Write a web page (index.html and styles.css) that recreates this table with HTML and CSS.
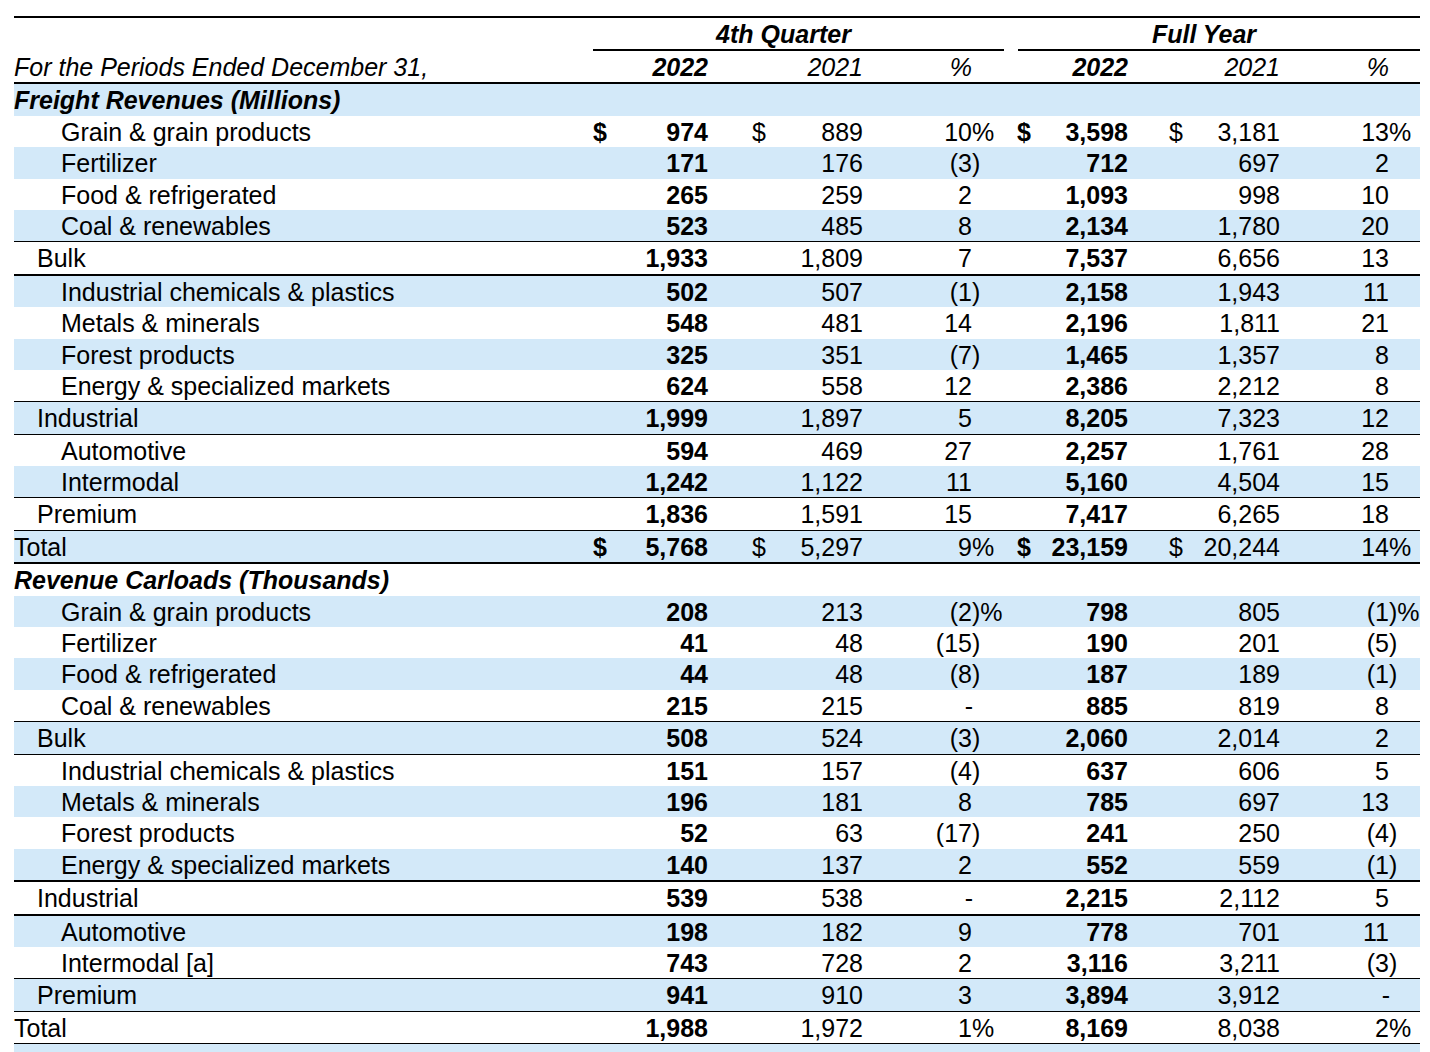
FILE: index.html
```html
<!DOCTYPE html>
<html lang="en">
<head>
<meta charset="utf-8">
<title>Freight Revenues and Revenue Carloads</title>
<link rel="stylesheet" href="styles.css">
</head>
<body>
<div class="tbl">
  <div class="hrow1">
    <div class="grp gq">4th Quarter</div>
    <div class="grp gf">Full Year</div>
  </div>
  <div class="row hrow2">
    <div class="lab">For the Periods Ended December 31,</div>
    <div class="n"><b>2022</b></div>
    <div class="n">2021</div>
    <div class="p">%</div>
    <div class="n"><b>2022</b></div>
    <div class="n">2021</div>
    <div class="p">%</div>
  </div>

  <div class="row bl head"><div class="lab">Freight Revenues (Millions)</div><div></div><div></div><div></div><div></div><div></div><div></div></div>
  <div class="row item"><div class="lab">Grain &amp; grain products</div><div class="n"><span class="ds">$</span>974</div><div class="n"><span class="ds">$</span>889</div><div class="p">10<span class="h">%</span></div><div class="n"><span class="ds">$</span>3,598</div><div class="n"><span class="ds">$</span>3,181</div><div class="p">13<span class="h">%</span></div></div>
  <div class="row item bl"><div class="lab">Fertilizer</div><div class="n">171</div><div class="n">176</div><div class="p">(3<span class="h">)</span></div><div class="n">712</div><div class="n">697</div><div class="p">2</div></div>
  <div class="row item"><div class="lab">Food &amp; refrigerated</div><div class="n">265</div><div class="n">259</div><div class="p">2</div><div class="n">1,093</div><div class="n">998</div><div class="p">10</div></div>
  <div class="row item bl"><div class="lab">Coal &amp; renewables</div><div class="n">523</div><div class="n">485</div><div class="p">8</div><div class="n">2,134</div><div class="n">1,780</div><div class="p">20</div></div>
  <div class="row sub t1"><div class="lab">Bulk</div><div class="n">1,933</div><div class="n">1,809</div><div class="p">7</div><div class="n">7,537</div><div class="n">6,656</div><div class="p">13</div></div>
  <div class="row item bl t2"><div class="lab">Industrial chemicals &amp; plastics</div><div class="n">502</div><div class="n">507</div><div class="p">(1<span class="h">)</span></div><div class="n">2,158</div><div class="n">1,943</div><div class="p">11</div></div>
  <div class="row item"><div class="lab">Metals &amp; minerals</div><div class="n">548</div><div class="n">481</div><div class="p">14</div><div class="n">2,196</div><div class="n">1,811</div><div class="p">21</div></div>
  <div class="row item bl"><div class="lab">Forest products</div><div class="n">325</div><div class="n">351</div><div class="p">(7<span class="h">)</span></div><div class="n">1,465</div><div class="n">1,357</div><div class="p">8</div></div>
  <div class="row item"><div class="lab">Energy &amp; specialized markets</div><div class="n">624</div><div class="n">558</div><div class="p">12</div><div class="n">2,386</div><div class="n">2,212</div><div class="p">8</div></div>
  <div class="row sub bl t1"><div class="lab">Industrial</div><div class="n">1,999</div><div class="n">1,897</div><div class="p">5</div><div class="n">8,205</div><div class="n">7,323</div><div class="p">12</div></div>
  <div class="row item t1"><div class="lab">Automotive</div><div class="n">594</div><div class="n">469</div><div class="p">27</div><div class="n">2,257</div><div class="n">1,761</div><div class="p">28</div></div>
  <div class="row item bl"><div class="lab">Intermodal</div><div class="n">1,242</div><div class="n">1,122</div><div class="p">11</div><div class="n">5,160</div><div class="n">4,504</div><div class="p">15</div></div>
  <div class="row sub t1"><div class="lab">Premium</div><div class="n">1,836</div><div class="n">1,591</div><div class="p">15</div><div class="n">7,417</div><div class="n">6,265</div><div class="p">18</div></div>
  <div class="row tot bl t1"><div class="lab">Total</div><div class="n"><span class="ds">$</span>5,768</div><div class="n"><span class="ds">$</span>5,297</div><div class="p">9<span class="h">%</span></div><div class="n"><span class="ds">$</span>23,159</div><div class="n"><span class="ds">$</span>20,244</div><div class="p">14<span class="h">%</span></div></div>

  <div class="row head t2"><div class="lab">Revenue Carloads (Thousands)</div><div></div><div></div><div></div><div></div><div></div><div></div></div>
  <div class="row item bl"><div class="lab">Grain &amp; grain products</div><div class="n">208</div><div class="n">213</div><div class="p">(2<span class="h">)%</span></div><div class="n">798</div><div class="n">805</div><div class="p">(1<span class="h">)%</span></div></div>
  <div class="row item"><div class="lab">Fertilizer</div><div class="n">41</div><div class="n">48</div><div class="p">(15<span class="h">)</span></div><div class="n">190</div><div class="n">201</div><div class="p">(5<span class="h">)</span></div></div>
  <div class="row item bl"><div class="lab">Food &amp; refrigerated</div><div class="n">44</div><div class="n">48</div><div class="p">(8<span class="h">)</span></div><div class="n">187</div><div class="n">189</div><div class="p">(1<span class="h">)</span></div></div>
  <div class="row item"><div class="lab">Coal &amp; renewables</div><div class="n">215</div><div class="n">215</div><div class="p"><span class="dash">-</span></div><div class="n">885</div><div class="n">819</div><div class="p">8</div></div>
  <div class="row sub bl t1"><div class="lab">Bulk</div><div class="n">508</div><div class="n">524</div><div class="p">(3<span class="h">)</span></div><div class="n">2,060</div><div class="n">2,014</div><div class="p">2</div></div>
  <div class="row item t1"><div class="lab">Industrial chemicals &amp; plastics</div><div class="n">151</div><div class="n">157</div><div class="p">(4<span class="h">)</span></div><div class="n">637</div><div class="n">606</div><div class="p">5</div></div>
  <div class="row item bl"><div class="lab">Metals &amp; minerals</div><div class="n">196</div><div class="n">181</div><div class="p">8</div><div class="n">785</div><div class="n">697</div><div class="p">13</div></div>
  <div class="row item"><div class="lab">Forest products</div><div class="n">52</div><div class="n">63</div><div class="p">(17<span class="h">)</span></div><div class="n">241</div><div class="n">250</div><div class="p">(4<span class="h">)</span></div></div>
  <div class="row item bl"><div class="lab">Energy &amp; specialized markets</div><div class="n">140</div><div class="n">137</div><div class="p">2</div><div class="n">552</div><div class="n">559</div><div class="p">(1<span class="h">)</span></div></div>
  <div class="row sub t2"><div class="lab">Industrial</div><div class="n">539</div><div class="n">538</div><div class="p"><span class="dash">-</span></div><div class="n">2,215</div><div class="n">2,112</div><div class="p">5</div></div>
  <div class="row item bl t2"><div class="lab">Automotive</div><div class="n">198</div><div class="n">182</div><div class="p">9</div><div class="n">778</div><div class="n">701</div><div class="p">11</div></div>
  <div class="row item"><div class="lab">Intermodal [a]</div><div class="n">743</div><div class="n">728</div><div class="p">2</div><div class="n">3,116</div><div class="n">3,211</div><div class="p">(3<span class="h">)</span></div></div>
  <div class="row sub bl t1"><div class="lab">Premium</div><div class="n">941</div><div class="n">910</div><div class="p">3</div><div class="n">3,894</div><div class="n">3,912</div><div class="p"><span class="dash">-</span></div></div>
  <div class="row tot t1"><div class="lab">Total</div><div class="n">1,988</div><div class="n">1,972</div><div class="p">1<span class="h">%</span></div><div class="n">8,169</div><div class="n">8,038</div><div class="p">2<span class="h">%</span></div></div>
  <div class="row bl t1 empty"><div class="lab"></div><div></div><div></div><div></div><div></div><div></div><div></div></div>
</div>
</body>
</html>
```

FILE: styles.css
```css
* {
  box-sizing: border-box;
  margin: 0;
  padding: 0;
}

body {
  margin: 0;
  background: #ffffff;
  color: #000000;
  font-family: "Liberation Sans", Arial, sans-serif;
  font-size: 25px;
  overflow: hidden;
}

.tbl {
  margin: 16px 0 0 14px;
  width: 1406px;
  border-top: 2px solid #000;
}

.hrow1,
.row {
  display: grid;
  grid-template-columns: 576px 126px 155px 133px 132px 152px 132px;
  white-space: nowrap;
}

.hrow1 {
  height: 33px;
}

.grp {
  font-weight: bold;
  font-style: italic;
  text-align: center;
  border-bottom: 2px solid #000;
  line-height: 29.4px;
  padding-top: 2px;
  padding-right: 30px;
  height: 33px;
}

.gq {
  grid-column: 2 / 5;
  margin-left: 3px;
}

.gf {
  grid-column: 5 / 8;
  margin-left: 14px;
}

.row {
  box-sizing: content-box;
  height: 29.4px;
  line-height: 29.4px;
  padding-top: 2px;
}

.hrow2 {
  font-style: italic;
  border-bottom: 2px solid #000;
}

.bl {
  background: #d3e9f9;
}

.t1 {
  border-top: 1px solid #000;
}

.t2 {
  border-top: 2px solid #000;
}

.head .lab {
  font-weight: bold;
  font-style: italic;
}

.sub .lab {
  padding-left: 23px;
}

.item .lab {
  padding-left: 47px;
}

.n {
  display: flex;
  justify-content: flex-end;
  padding-right: 8px;
}

.ds {
  margin-right: auto;
}

.row > :nth-child(2),
.row > :nth-child(5) {
  font-weight: bold;
}

.row > :nth-child(2) {
  padding-left: 3px;
}

.row > :nth-child(3) {
  padding-left: 36px;
}

.row > :nth-child(5) {
  padding-left: 13px;
}

.row > :nth-child(6) {
  padding-left: 33px;
}

.p {
  text-align: right;
}

.row > :nth-child(4) {
  padding-right: 32px;
}

.row > :nth-child(7) {
  padding-right: 31px;
}

.h {
  display: inline-block;
  width: 0;
  white-space: nowrap;
}

.dash {
  margin-right: -1px;
}

.empty {
  height: 40px;
}
```
